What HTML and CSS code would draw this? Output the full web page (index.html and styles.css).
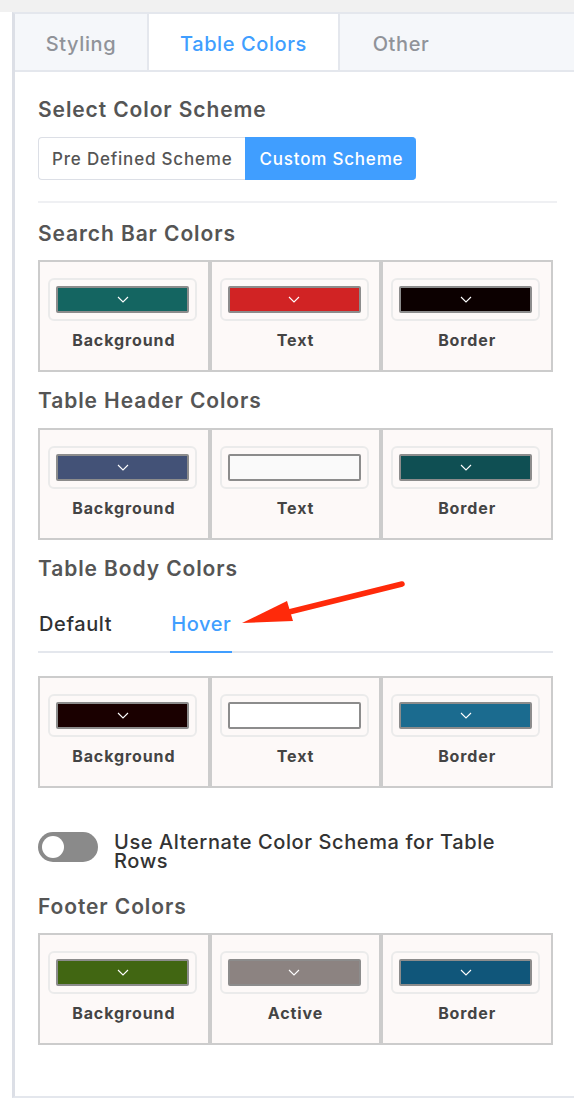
FILE: index.html
```html
<!DOCTYPE html>
<html lang="en">
<head>
<meta charset="utf-8">
<title>Table Colors</title>
<link rel="stylesheet" href="styles.css">
</head>
<body>
<div class="topbar"></div>
<div class="page">
  <div class="panel">
    <div class="tabs">
      <div class="tab">Styling</div>
      <div class="tab active">Table Colors</div>
      <div class="tab">Other</div>
    </div>
    <div class="content">
      <h3 class="heading first">Select Color Scheme</h3>
      <div class="btn-group">
        <span class="btn">Pre Defined Scheme</span>
        <span class="btn primary">Custom Scheme</span>
      </div>
      <div class="divider"></div>

      <h3 class="heading tight">Search Bar Colors</h3>
      <div class="grid">
        <div class="cell"><div class="picker"><div class="swatch" style="background:#146561"><svg class="chev" viewBox="0 0 12 7"><path d="M1 1l5 5 5-5"/></svg></div></div><div class="label">Background</div></div>
        <div class="cell"><div class="picker"><div class="swatch" style="background:#d12324"><svg class="chev" viewBox="0 0 12 7"><path d="M1 1l5 5 5-5"/></svg></div></div><div class="label">Text</div></div>
        <div class="cell"><div class="picker"><div class="swatch" style="background:#0c0000"><svg class="chev" viewBox="0 0 12 7"><path d="M1 1l5 5 5-5"/></svg></div></div><div class="label">Border</div></div>
      </div>

      <h3 class="heading">Table Header Colors</h3>
      <div class="grid">
        <div class="cell"><div class="picker"><div class="swatch" style="background:#435277"><svg class="chev" viewBox="0 0 12 7"><path d="M1 1l5 5 5-5"/></svg></div></div><div class="label">Background</div></div>
        <div class="cell"><div class="picker"><div class="swatch" style="background:#fafafa"></div></div><div class="label">Text</div></div>
        <div class="cell"><div class="picker"><div class="swatch" style="background:#0f4f53"><svg class="chev" viewBox="0 0 12 7"><path d="M1 1l5 5 5-5"/></svg></div></div><div class="label">Border</div></div>
      </div>

      <h3 class="heading">Table Body Colors</h3>
      <div class="subtabs">
        <span class="subtab">Default</span>
        <span class="subtab active">Hover</span>
      </div>
      <div class="grid body-grid">
        <div class="cell"><div class="picker"><div class="swatch" style="background:#1a0000"><svg class="chev" viewBox="0 0 12 7"><path d="M1 1l5 5 5-5"/></svg></div></div><div class="label">Background</div></div>
        <div class="cell"><div class="picker"><div class="swatch" style="background:#ffffff"></div></div><div class="label">Text</div></div>
        <div class="cell"><div class="picker"><div class="swatch" style="background:#1b6b8f"><svg class="chev" viewBox="0 0 12 7"><path d="M1 1l5 5 5-5"/></svg></div></div><div class="label">Border</div></div>
      </div>

      <div class="switch-row">
        <span class="switch"><span class="knob"></span></span>
        <span class="switch-label">Use Alternate Color Schema for Table Rows</span>
      </div>

      <h3 class="heading footer-heading tight">Footer Colors</h3>
      <div class="grid">
        <div class="cell"><div class="picker"><div class="swatch" style="background:#416612"><svg class="chev" viewBox="0 0 12 7"><path d="M1 1l5 5 5-5"/></svg></div></div><div class="label">Background</div></div>
        <div class="cell"><div class="picker"><div class="swatch" style="background:#8c8381"><svg class="chev" viewBox="0 0 12 7"><path d="M1 1l5 5 5-5"/></svg></div></div><div class="label">Active</div></div>
        <div class="cell"><div class="picker"><div class="swatch" style="background:#10567a"><svg class="chev" viewBox="0 0 12 7"><path d="M1 1l5 5 5-5"/></svg></div></div><div class="label">Border</div></div>
      </div>
    </div>
  </div>
</div>
<svg class="arrow" width="574" height="1098" viewBox="0 0 574 1098">
  <path d="M402 584 L285 613" stroke="#ff2a0a" stroke-width="5.5" stroke-linecap="round" fill="none"/>
  <path d="M242 623 L287 601 L293 621 Z" fill="#ff2a0a"/>
</svg>
</body>
</html>
```
FILE: styles.css
```css
* { box-sizing: border-box; }
html, body { margin: 0; padding: 0; }
body {
  background: #ffffff;
  font-family: "Inter", "Liberation Sans", sans-serif;
  width: 574px;
  height: 1098px;
  overflow: hidden;
  position: relative;
}
.topbar {
  height: 12px;
  background: #f1f1f1;
}
.page {
  padding-left: 12px;
}
.panel {
  width: 562px;
  height: 1086px;
  border-left: 3px solid #dcdfe6;
  border-top: 2px solid #e4e7ed;
  border-bottom: 2px solid #e4e7ed;
  background: #fff;
}
.tabs {
  display: flex;
  height: 58px;
  background: #f5f7fa;
  border-bottom: 2px solid #e4e7ed;
}
.tab {
  height: 56px;
  padding-top: 4px;
  display: flex;
  align-items: center;
  justify-content: center;
  font-size: 20px;
  font-weight: 500;
  color: #909399;
  letter-spacing: 0.6px;
  border-right: 2px solid #e4e7ed;
}
.tab:nth-child(1) { width: 134px; }
.tab:nth-child(2) { width: 191px; }
.tab:nth-child(3) { width: 122px; border-right: none; }
.tab.active {
  background: #fff;
  color: #409eff;
}
.content {
  padding: 26px 0 0 23px;
}
.heading {
  margin: 17px 0 15px;
  font-size: 21px;
  line-height: 24px;
  font-weight: 600;
  color: #555555;
  letter-spacing: 0.9px;
}
.heading.first { margin-top: 0; margin-bottom: 15px; }
.heading.tight { margin-bottom: 14px; }
.btn-group {
  display: inline-flex;
  height: 43px;
}
.btn {
  display: flex;
  align-items: center;
  padding: 0 13px;
  font-size: 17px;
  font-weight: 500;
  letter-spacing: 0.8px;
  color: #555;
  border: 1px solid #dcdfe6;
  border-right: none;
  border-radius: 4px 0 0 4px;
  background: #fff;
}
.btn.primary {
  background: #409eff;
  border-color: #409eff;
  color: #fff;
  border-radius: 0 4px 4px 0;
}
.divider {
  height: 2px;
  background: #eff0f3;
  margin: 21px 0 19px;
  width: 519px;
}
.grid {
  display: grid;
  grid-template-columns: repeat(3, 1fr);
  width: 515px;
}
.cell {
  border: 2px solid #cccccc;
  background: #fdf9f8;
  padding: 16px 0 20px 8px;
  display: flex;
  flex-direction: column;
  align-items: flex-start;
}
.picker {
  width: 149px;
  height: 43px;
  border: 2px solid #ebebeb;
  border-radius: 6px;
  background: #fdf9f8;
  padding: 6px 6px;
}
.swatch {
  height: 27px;
  border: 2px solid #8c8c8c;
  border-radius: 2px;
  display: flex;
  align-items: center;
  justify-content: center;
}
.chev {
  width: 12px;
  height: 7px;
  stroke: #ffffff;
  stroke-width: 1.1;
  fill: none;
}
.label {
  align-self: center;
  margin: 9px 0 0 -8px;
  font-size: 16px;
  line-height: 20px;
  font-weight: 700;
  color: #444;
  letter-spacing: 0.9px;
  text-align: center;
}
.subtabs {
  display: flex;
  margin-top: 16px;
  width: 515px;
  border-bottom: 2px solid #e4e7ed;
  height: 56px;
}
.subtab {
  display: flex;
  align-items: center;
  height: 56px;
  font-size: 20px;
  font-weight: 500;
  color: #303133;
  letter-spacing: 0.6px;
  margin-right: 57px;
  padding: 0 1px;
  border-bottom: 2px solid transparent;
}
.subtab.active {
  color: #409eff;
  border-bottom-color: #409eff;
}
.body-grid { margin-top: 23px; }
.switch-row {
  display: flex;
  align-items: flex-start;
  margin-top: 44px;
}
.switch {
  flex: none;
  width: 60px;
  height: 30px;
  border-radius: 15px;
  background: #8a8a8a;
  position: relative;
  margin-right: 16px;
}
.knob {
  position: absolute;
  left: 4px;
  top: 4px;
  width: 22px;
  height: 22px;
  border-radius: 50%;
  background: #fff;
}
.switch-label {
  font-size: 20px;
  line-height: 19px;
  font-weight: 500;
  color: #333;
  letter-spacing: 0.6px;
  max-width: 420px;
  padding-top: 1px;
}
.footer-heading { margin-top: 24px; }
.arrow {
  position: absolute;
  left: 0;
  top: 0;
  pointer-events: none;
}
```
